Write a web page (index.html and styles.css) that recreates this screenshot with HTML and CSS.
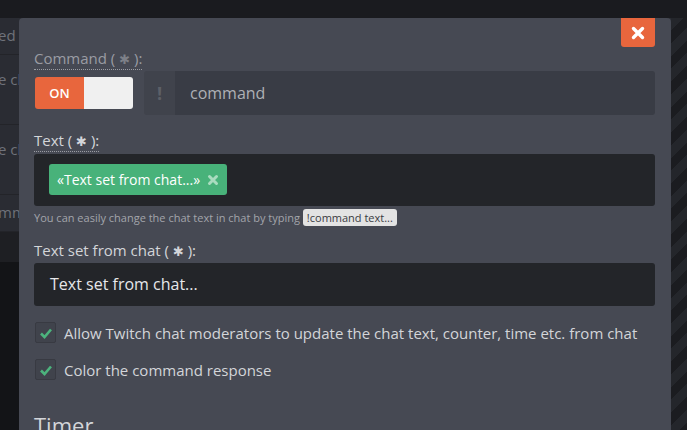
FILE: index.html
```html
<!DOCTYPE html>
<html>
<head>
    <meta name="viewport" content="width=device-width, initial-scale=1.0">
    <link rel="stylesheet" href="styles.css">
</head>
<body>
    <div class="topbar"></div>
    <div class="page">
        <div class="list">
            <div class="list-row short">ed text</div>
            <div class="list-row">e chat text</div>
            <div class="list-row">e chat text</div>
            <div class="list-row short">mmand</div>
            <div class="list-foot"></div>
        </div>
        <div class="stripes"></div>
    </div>

    <div class="modal">
        <button class="close-button">
            <svg width="14" height="14" viewBox="0 0 14 14"><path d="M2.5 2.5 L11.5 11.5 M11.5 2.5 L2.5 11.5" stroke="#fff" stroke-width="3.4" stroke-linecap="round"/></svg>
        </button>

        <div class="label dim"><span class="dotted">Command ( <span class="star">&#10033;</span> ):</span></div>
        <div class="command-row">
            <div class="toggle">
                <span class="toggle-on">ON</span>
                <span class="toggle-off"></span>
            </div>
            <div class="input-group">
                <span class="addon">!</span>
                <span class="command-input">command</span>
            </div>
        </div>

        <div class="label"><span class="dotted">Text ( <span class="star">&#10033;</span> ):</span></div>
        <div class="tag-box">
            <span class="tag">«Text set from chat...»
                <svg width="12" height="12" viewBox="0 0 12 12"><path d="M2.5 2.5 L9.5 9.5 M9.5 2.5 L2.5 9.5" stroke="#a9dcbf" stroke-width="3" stroke-linecap="round"/></svg>
            </span>
        </div>
        <div class="help">You can easily change the chat text in chat by typing <span class="code">!command text...</span></div>

        <div class="label bright">Text set from chat ( <span class="star">&#10033;</span> ):</div>
        <div class="text-input">Text set from chat...</div>

        <div class="check-row first">
            <span class="checkbox"><svg width="14" height="12" viewBox="0 0 14 12"><path d="M2 6.5 L5.5 10 L12 2.5" fill="none" stroke="#4cb37d" stroke-width="2.6"/></svg></span>
            Allow Twitch chat moderators to update the chat text, counter, time etc. from chat
        </div>
        <div class="check-row">
            <span class="checkbox"><svg width="14" height="12" viewBox="0 0 14 12"><path d="M2 6.5 L5.5 10 L12 2.5" fill="none" stroke="#4cb37d" stroke-width="2.6"/></svg></span>
            Color the command response
        </div>

        <div class="heading">Timer</div>
    </div>
</body>
</html>
```

FILE: styles.css
```css
body {
    margin: 0;
    padding: 0;
    background-color: #131417;
    font-family: "Open Sans", "DejaVu Sans", sans-serif;
    overflow: hidden;
    height: 430px;
}

.topbar {
    height: 18px;
    background-color: #1a1b1f;
}

.page {
    display: flex;
    height: 412px;
}

.list {
    flex: 1;
    display: flex;
    flex-direction: column;
}

.list-row {
    height: 70px;
    background-color: #2a2c33;
    border-bottom: 1px solid #232429;
    color: #6f727a;
    font-size: 15px;
    line-height: 48px;
    text-indent: -2px;
    box-sizing: border-box;
}

.list-row.short {
    height: 37px;
    line-height: 34px;
}

.list-foot {
    height: 30px;
    background-color: #1e1f23;
}

.stripes {
    width: 16px;
    background: repeating-linear-gradient(135deg, #24262b 0, #24262b 9px, #1b1c20 9px, #1b1c20 18px);
}

.modal {
    position: absolute;
    left: 19px;
    top: 18px;
    width: 652px;
    height: 430px;
    box-sizing: border-box;
    background-color: #464953;
    border-radius: 4px 4px 0 0;
    padding: 30px 16px 0 15px;
}

.close-button {
    position: absolute;
    top: 0;
    right: 16px;
    width: 34px;
    height: 29px;
    border: none;
    padding: 0;
    background-color: #e8663d;
    border-radius: 0 0 3px 3px;
    display: flex;
    align-items: center;
    justify-content: center;
}

.label {
    font-size: 15px;
    line-height: 20px;
    height: 20px;
    color: #d3d5d9;
}

.label.dim {
    color: #9a9ca3;
}

.label.dim .star {
    color: #7d8088;
}

.dotted {
    border-bottom: 1px dotted #9a9ca3;
    padding-bottom: 1px;
}

.star {
    font-size: 13px;
    font-weight: 700;
}

.command-row {
    display: flex;
    align-items: center;
    gap: 11px;
    margin-top: 3px;
    height: 44px;
}

.toggle {
    display: flex;
    width: 98px;
    height: 32px;
    border-radius: 3px;
    overflow: hidden;
    margin-left: 1px;
}

.toggle-on {
    width: 49px;
    background-color: #e8663d;
    color: #fff;
    font-weight: 600;
    font-size: 13px;
    line-height: 32px;
    text-align: center;
}

.toggle-off {
    flex: 1;
    background-color: #f0f0f0;
}

.input-group {
    flex: 1;
    display: flex;
    height: 44px;
    border-radius: 3px;
    overflow: hidden;
}

.addon {
    width: 31px;
    background-color: #40434c;
    color: #5d6068;
    font-weight: 700;
    font-size: 18px;
    line-height: 44px;
    text-align: center;
}

.command-input {
    flex: 1;
    background-color: #393c45;
    color: #aeb0b5;
    font-size: 16px;
    line-height: 44px;
    padding-left: 15px;
}

.command-row + .label {
    margin-top: 15px;
}

.tag-box {
    margin-top: 4px;
    height: 52px;
    box-sizing: border-box;
    background-color: #232529;
    border-radius: 3px;
    padding: 10px 15px;
}

.tag {
    display: inline-flex;
    align-items: center;
    gap: 7px;
    height: 31px;
    background-color: #48b27a;
    color: #fff;
    font-size: 14px;
    padding: 0 8px;
    border-radius: 3px;
}

.help {
    font-size: 11px;
    color: #a3a5ab;
    line-height: 20px;
    margin-top: 2px;
}

.code {
    background-color: #e3e3e3;
    color: #3a3c42;
    border-radius: 3px;
    padding: 1px 4px;
}

.label.bright {
    margin-top: 12px;
}

.text-input {
    margin-top: 3px;
    height: 43px;
    background-color: #232529;
    border-radius: 3px;
    color: #e6e7ea;
    font-size: 16px;
    line-height: 43px;
    padding-left: 16px;
}

.check-row {
    display: flex;
    align-items: center;
    gap: 8px;
    height: 21px;
    color: #d3d5d9;
    font-size: 15px;
    margin-top: 16px;
}

.check-row.first {
    margin-top: 16px;
}

.checkbox {
    width: 19px;
    height: 19px;
    margin-left: 1px;
    background-color: #40434c;
    border: 1px solid #383a42;
    border-radius: 2px;
    display: flex;
    align-items: center;
    justify-content: center;
}

.heading {
    margin-top: 30px;
    font-size: 22px;
    color: #d3d5d9;
}
```
